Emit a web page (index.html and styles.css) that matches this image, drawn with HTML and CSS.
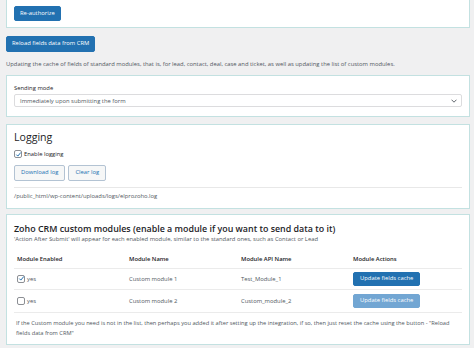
FILE: index.html
```html
<!DOCTYPE html>
<html lang="en">
<head>
    <meta charset="UTF-8">
    <meta name="viewport" content="width=device-width, initial-scale=1.0">
    <title>Zoho CRM settings</title>
    <link rel="stylesheet" href="styles.css">
</head>
<body>
    <div class="card card-top">
        <button class="btn btn-primary">Re-authorize</button>
    </div>

    <button class="btn btn-primary btn-reload">Reload fields data from CRM</button>
    <p class="note">Updating the cache of fields of standard modules, that is, for lead, contact, deal, case and ticket, as well as updating the list of custom modules.</p>

    <div class="card card-mode">
        <label class="field-label">Sending mode</label>
        <div class="select">
            <span>Immediately upon submitting the form</span>
            <svg class="chevron" width="6" height="4" viewBox="0 0 6 4"><path d="M0.5 0.7 L3 3.2 L5.5 0.7" fill="none" stroke="#50575e" stroke-width="0.9"/></svg>
        </div>
    </div>

    <div class="card card-log">
        <h2 class="title">Logging</h2>
        <label class="check-row">
            <span class="checkbox checked"><svg width="7" height="7" viewBox="0 0 7 7"><path d="M1.3 3.6 L2.8 5.1 L5.8 1.5" fill="none" stroke="#2271b1" stroke-width="1"/></svg></span>
            Enable logging
        </label>
        <div class="log-actions">
            <button class="btn btn-secondary">Download log</button>
            <button class="btn btn-secondary">Clear log</button>
        </div>
        <hr class="divider">
        <p class="path">/public_html/wp-content/uploads/logs/elprozoho.log</p>
    </div>

    <div class="card card-modules">
        <h3 class="modules-title">Zoho CRM custom modules (enable a module if you want to send data to it)</h3>
        <p class="modules-sub">'Action After Submit' will appear for each enabled module, similar to the standard ones, such as Contact or Lead</p>
        <table class="modules">
            <thead>
                <tr>
                    <th>Module Enabled</th>
                    <th>Module Name</th>
                    <th>Module API Name</th>
                    <th>Module Actions</th>
                </tr>
            </thead>
            <tbody>
                <tr>
                    <td><span class="check-row"><span class="checkbox checked"><svg width="7" height="7" viewBox="0 0 7 7"><path d="M1.3 3.6 L2.8 5.1 L5.8 1.5" fill="none" stroke="#2271b1" stroke-width="1"/></svg></span>yes</span></td>
                    <td>Custom module 1</td>
                    <td>Test_Module_1</td>
                    <td><button class="btn btn-primary btn-cache">Update fields cache</button></td>
                </tr>
                <tr>
                    <td><span class="check-row"><span class="checkbox"></span>yes</span></td>
                    <td>Custom module 2</td>
                    <td>Custom_module_2</td>
                    <td><button class="btn btn-primary btn-cache is-disabled">Update fields cache</button></td>
                </tr>
            </tbody>
        </table>
        <p class="modules-foot">If the Custom module you need is not in the list, then perhaps you added it after setting up the integration, if so, then just reset the cache using the button - "Reload fields data from CRM"</p>
    </div>
</body>
</html>
```

FILE: styles.css
```css
/* base */
* {
    margin: 0;
    padding: 0;
    box-sizing: border-box;
}

body {
    font-family: 'Open Sans', sans-serif;
    font-size: 5.85px;
    line-height: 8px;
    color: #50575e;
    background-color: #f0f0f1;
    padding: 0 4px 0 6px;
    height: 348px;
    overflow: hidden;
}

/* cards */
.card {
    background-color: #fff;
    border: 1px solid #c3e1e1;
    padding: 7px 7px 8px;
}

.card-top {
    border-top: 0;
    padding: 6px 7px 6px;
}

/* buttons */
.btn {
    font-family: inherit;
    font-size: 5.85px;
    line-height: 1;
    border-radius: 2px;
    cursor: pointer;
}

.btn-primary {
    background-color: #2271b1;
    border: 1px solid #2271b1;
    color: #fff;
    height: 15px;
    padding: 0 5px;
}

.btn-reload {
    margin-top: 8px;
    height: 16px;
}

.btn-secondary {
    background-color: #f6f7f7;
    border: 1px solid #b3c3d3;
    color: #2271b1;
    height: 16px;
    padding: 0 6px;
}

.note {
    margin: 8px 0 7px;
}

/* sending mode */
.card-mode {
    padding: 8px 7px 9px;
}

.field-label {
    display: block;
    color: #1d2327;
    margin-bottom: 2px;
}

.select {
    display: flex;
    align-items: center;
    justify-content: space-between;
    height: 13px;
    border: 1px solid #dcdcde;
    border-radius: 2px;
    padding: 0 4px 0 5px;
    color: #50575e;
}

/* logging */
.card-log {
    margin-top: 7px;
}

.title {
    font-size: 10.6px;
    font-weight: 400;
    line-height: 11px;
    color: #1d2327;
}

.check-row {
    display: flex;
    align-items: center;
    gap: 2px;
    color: #1d2327;
}

.card-log .check-row {
    margin-top: 6px;
    height: 10px;
}

.modules .check-row {
    color: #50575e;
}

.checkbox {
    display: inline-flex;
    width: 8px;
    height: 8px;
    border: 1px solid #8c8f94;
    border-radius: 2px;
    background: #fff;
    align-items: center;
    justify-content: center;
}

.checkbox svg {
    flex: none;
}

.log-actions {
    display: flex;
    gap: 3px;
    margin-top: 6px;
}

.divider {
    border: 0;
    border-top: 1px solid #e8e8e8;
    margin-top: 6px;
}

.path {
    margin-top: 4px;
}

/* custom modules */
.card-modules {
    margin-top: 5px;
    padding: 8px 7px 6px;
}

.modules-title {
    font-size: 8.9px;
    font-weight: 600;
    line-height: 12px;
    color: #1d2327;
}

.modules-sub {
    line-height: 8px;
}

.modules {
    width: 100%;
    border-collapse: collapse;
    table-layout: fixed;
    margin-top: 7px;
}

.modules th,
.modules td {
    width: 25%;
    text-align: left;
    padding: 3px 3px;
    border-bottom: 1px solid #ebebeb;
}

.modules th {
    font-weight: 600;
    color: #1d2327;
    height: 18px;
}

.modules td {
    height: 21px;
}

.modules tbody tr:last-child td {
    height: 23px;
}

.btn-cache {
    height: 14px;
    padding: 0 6px;
}

.btn-cache.is-disabled {
    background-color: #72a6d3;
    border-color: #72a6d3;
}

.modules-foot {
    margin-top: 5px;
    font-size: 5.7px;
    line-height: 10px;
    padding-left: 2px;
}
```
